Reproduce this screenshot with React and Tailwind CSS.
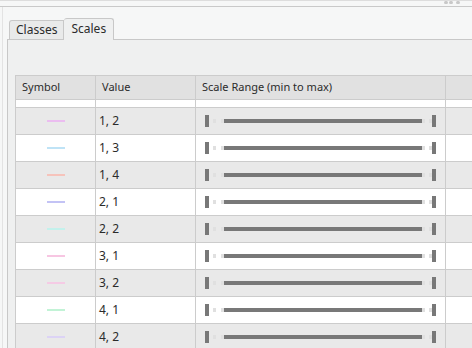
import React from 'react';

const rows = [
  { value: '1, 1', color: '#f0c0d8' },
  { value: '1, 2', color: '#ebbdf0' },
  { value: '1, 3', color: '#bfe3f6' },
  { value: '1, 4', color: '#f6c3bb' },
  { value: '2, 1', color: '#c3c3f5' },
  { value: '2, 2', color: '#c3f1ec' },
  { value: '3, 1', color: '#f7c6e2' },
  { value: '3, 2', color: '#f5cbe5' },
  { value: '4, 1', color: '#c2f3d6' },
  { value: '4, 2', color: '#dcd3f5' },
];

function RangeBar() {
  return (
    <div className="flex items-center h-full pl-[9px]">
      <div className="w-[4px] h-[12px] bg-[#787878]" />
      <div className="w-[3px] h-[4px] bg-[#e0e0e0] ml-[4px]" />
      <div className="w-[3px] h-[4px] bg-[#e0e0e0] ml-[5px]" />
      <div className="w-[198px] h-[4px] bg-[#787878]" />
      <div className="w-[3px] h-[4px] bg-[#e0e0e0]" />
      <div className="w-[3px] h-[4px] bg-[#e0e0e0] ml-[4px]" />
      <div className="w-[4px] h-[12px] bg-[#787878]" />
    </div>
  );
}

const cols = 'grid grid-cols-[80px_100px_250px_1fr]';

export default function App() {
  return (
    <div className="w-[472px] h-[348px] overflow-hidden bg-[#f6f7f7] flex flex-col text-[11px] text-[#2b2b2b]" style={{ fontFamily: '"Segoe UI", "Noto Sans", sans-serif' }}>
      {/* top strip */}
      <div className="h-[7px] shrink-0 border-t border-b border-t-[#dddddd] border-b-[#c9c9c9] flex justify-end items-start pr-[12px] gap-[1px]">
        <div className="w-[4px] h-[3px] rounded-full bg-[#c8c8c8]" />
        <div className="w-[4px] h-[3px] rounded-full bg-[#c8c8c8]" />
        <div className="w-[4px] h-[3px] rounded-full bg-[#c8c8c8] ml-[2px]" />
      </div>

      <div className="flex-1 flex flex-col ml-[2px] border-l border-[#e3e3e3] pl-[4px] min-h-0">
        {/* tab strip */}
        <div className="h-[32px] shrink-0 flex items-end pl-[2px]">
          <div className="h-[19px] px-[6px] border border-b-0 border-[#c8c8c8] rounded-tl-[3px] bg-[#e9eaea] flex items-center leading-none text-[12px]">
            Classes
          </div>
          <div className="h-[22px] px-[7px] border border-b-0 border-l-0 border-[#c8c8c8] rounded-t-[3px] bg-[#eff0f0] flex items-center leading-none relative z-10 mb-[-1px] pb-[1px] text-[12px]">
            Scales
          </div>
        </div>

        {/* panel */}
        <div className="flex-1 min-h-0 border-l border-t border-[#c8c8c8] bg-[#eff0f0] pt-[35px] pl-[7px] flex flex-col">
          <div className="flex-1 min-h-0 border-l border-t border-[#cccccc] flex flex-col">
            <div className={`${cols} h-[24px] shrink-0 bg-[#e1e1e1] relative z-10`}>
              <div className="border-r border-b border-[#cccccc] pl-[6px] flex items-center">Symbol</div>
              <div className="border-r border-b border-[#cccccc] pl-[6px] flex items-center">Value</div>
              <div className="border-r border-b border-[#cccccc] pl-[6px] flex items-center">Scale Range (min to max)</div>
              <div className="border-b border-[#cccccc]" />
            </div>
            <div className="flex-1 min-h-0 overflow-hidden">
              <div className="mt-[-19px]">
                {rows.map((r, i) => (
                  <div key={r.value} className={`${cols} h-[27px] ${i % 2 === 0 ? 'bg-white' : 'bg-[#e9e9e9]'}`}>
                    <div className="border-r border-b border-[#cccccc] flex items-center justify-center">
                      <div className="w-[18px] h-[2px]" style={{ backgroundColor: r.color }} />
                    </div>
                    <div className="border-r border-b border-[#cccccc] pl-[3px] flex items-center text-[12px]">{r.value}</div>
                    <div className="border-r border-b border-[#cccccc]">
                      <RangeBar />
                    </div>
                    <div className="border-b border-[#cccccc]" />
                  </div>
                ))}
              </div>
            </div>
          </div>
        </div>
      </div>
    </div>
  );
}
